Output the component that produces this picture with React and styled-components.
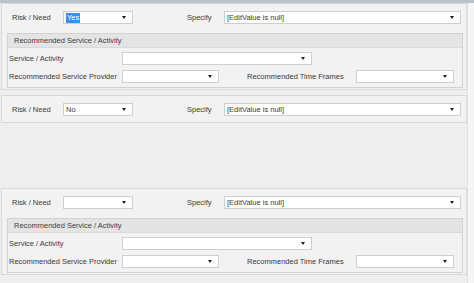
import React from "react";
import styled, { createGlobalStyle } from "styled-components";

const GlobalStyle = createGlobalStyle`
  html, body { margin: 0; padding: 0; background: #eeeeee; }
  body {
    font-family: "Liberation Sans", Arial, sans-serif;
    font-size: 7.5px;
    color: #3a3a3a;
    width: 474px;
    height: 283px;
    overflow: hidden;
  }
`;

const Page = styled.div`
  display: flex;
  flex-direction: column;
  height: 283px;
`;

const TopBand = styled.div`
  height: 3px;
  background: #bcc3c7;
  flex: none;
`;

const Body = styled.div`
  display: flex;
  flex: 1;
`;

const Content = styled.div`
  width: 467px;
  display: flex;
  flex-direction: column;
`;

const RightStrip = styled.div`
  flex: 1;
  background: #f5f5f5;
  border-left: 1px solid #e2e2e2;
`;

const Panel = styled.div`
  margin-left: 1px;
  margin-top: ${(p) => p.$top}px;
  width: 466px;
  box-sizing: border-box;
  border: 1px solid #d9d9d9;
  background: #f2f2f2;
  padding: 7px 0 ${(p) => p.$bottom}px 0;
  display: flex;
  flex-direction: column;
`;

const Row = styled.div`
  display: flex;
  align-items: center;
  height: 13px;
  padding-left: ${(p) => p.$pad || 0}px;
  margin-top: ${(p) => p.$top || 0}px;
`;

const FieldLabel = styled.div`
  width: ${(p) => p.$w}px;
  margin-left: ${(p) => p.$ml || 0}px;
  flex: none;
  white-space: nowrap;
  line-height: 13px;
`;

const ComboBox = styled.div`
  position: relative;
  width: ${(p) => p.$w}px;
  height: 13px;
  box-sizing: border-box;
  flex: none;
  background: #ffffff;
  border: 1px solid #cfcfcf;
  display: flex;
  align-items: center;
  padding-left: 2px;
  line-height: 11px;
  white-space: nowrap;
`;

const Arrow = styled.span`
  position: absolute;
  right: 6px;
  top: 4px;
  width: 0;
  height: 0;
  border-left: 2.5px solid transparent;
  border-right: 2.5px solid transparent;
  border-top: 3px solid #222;
`;

const Selected = styled.span`
  background: #3d8ee8;
  color: #ffffff;
  padding: 0 1px;
  line-height: 10px;
`;

const Group = styled.div`
  margin: 9px 0 0 5px;
  width: 456px;
  box-sizing: border-box;
  border: 1px solid #d2d2d2;
  background: #f2f2f2;
  padding-bottom: 4px;
`;

const GroupHeader = styled.div`
  height: 13px;
  line-height: 13px;
  background: #e4e4e4;
  border-bottom: 1px solid #dadada;
  padding-left: 6px;
  color: #3e3e3e;
`;

function Combo({ w, value, selected, arrow = true }) {
  return (
    <ComboBox $w={w}>
      {selected ? <Selected>{value}</Selected> : value}
      {arrow && <Arrow />}
    </ComboBox>
  );
}

function TopRow({ risk, selected }) {
  return (
    <Row $pad={10}>
      <FieldLabel $w={51}>Risk / Need</FieldLabel>
      <Combo w={70} value={risk} selected={selected} />
      <FieldLabel $w={37} $ml={54}>Specify</FieldLabel>
      <Combo w={237} value="[EditValue is null]" />
    </Row>
  );
}

function ServiceGroup() {
  return (
    <Group>
      <GroupHeader>Recommended Service / Activity</GroupHeader>
      <Row $pad={1} $top={4}>
        <FieldLabel $w={113}>Service / Activity</FieldLabel>
        <Combo w={190} />
      </Row>
      <Row $pad={1} $top={5}>
        <FieldLabel $w={113}>Recommended Service Provider</FieldLabel>
        <Combo w={97} />
        <FieldLabel $w={109} $ml={28}>Recommended Time Frames</FieldLabel>
        <Combo w={98} />
      </Row>
    </Group>
  );
}

export default function App() {
  return (
    <Page>
      <GlobalStyle />
      <TopBand />
      <Body>
        <Content>
          <Panel $top={0} $bottom={1}>
            <TopRow risk="Yes" selected />
            <ServiceGroup />
          </Panel>
          <Panel $top={5} $bottom={6}>
            <TopRow risk="No" />
          </Panel>
          <Panel $top={65} $bottom={1}>
            <TopRow risk="" />
            <ServiceGroup />
          </Panel>
        </Content>
        <RightStrip />
      </Body>
    </Page>
  );
}
